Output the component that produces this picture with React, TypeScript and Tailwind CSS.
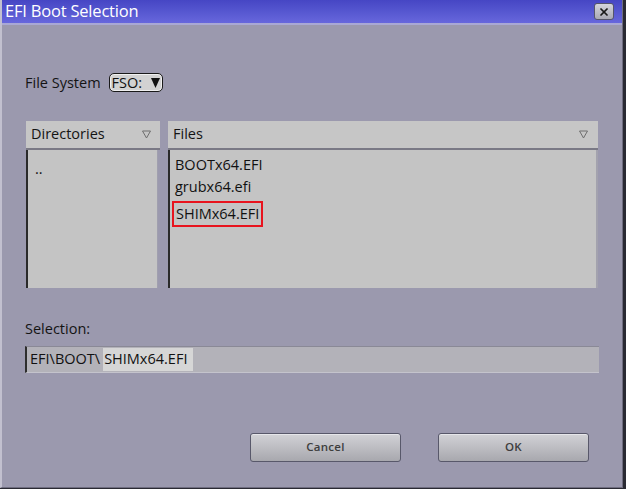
import { X } from 'lucide-react';

const font = { fontFamily: '"Open Sans", "Noto Sans", "Liberation Sans", sans-serif' };

function HeaderArrow() {
  return (
    <svg width="9" height="9" viewBox="0 0 9 9" className="shrink-0">
      <path d="M0.5 1 L8.5 1 L4.5 8 Z" fill="none" stroke="#6e6e6e" strokeWidth="1" />
    </svg>
  );
}

export default function App() {
  const files = ['BOOTx64.EFI', 'grubx64.efi'];

  return (
    <div className="w-[626px] h-[489px] bg-[#2a2a33] overflow-hidden" style={font}>
      <div className="w-[623px] h-[488px] flex flex-col bg-[#9b99ae] border-l-2 border-l-[#c2c0cf] border-r border-r-[#6f6d80] border-b border-b-[#6f6d80]">
        {/* Title bar */}
        <div className="h-[25px] flex items-center justify-between pl-[3px] pr-[8px] bg-gradient-to-b from-[#4646c4] to-[#6767dc] border-b-2 border-b-[#a9a8d4]">
          <span className="text-[16.5px] leading-none text-white tracking-[-0.2px]">EFI Boot Selection</span>
          <button className="w-[20px] h-[17px] flex items-center justify-center rounded-[3px] bg-gradient-to-b from-[#d4d4dc] to-[#a9a9b4] border border-[#55556a]">
            <X size={12} strokeWidth={3.5} className="text-[#1a1a1a]" />
          </button>
        </div>

        <div className="flex flex-col pl-[23px] pr-[23px]">
          {/* File system row */}
          <div className="mt-[47px] flex items-center gap-[8px]">
            <span className="text-[14.5px] text-[#141414]">File System</span>
            <div className="h-[19px] w-[54px] flex items-center justify-between px-[2px] rounded-[5px] border border-[#1a1a1a] bg-[#d2d2d2] shadow-[inset_0_0_0_1px_#f0f0f0]">
              <span className="text-[14.5px] leading-none text-[#111]">FSO:</span>
              <svg width="9" height="12" viewBox="0 0 9 12">
                <path d="M0 1 L9 1 L4.5 11 Z" fill="#111" />
              </svg>
            </div>
          </div>

          {/* Directories / files panels */}
          <div className="mt-[27px] flex gap-[8px] pl-[1px]">
            <div className="w-[134px] flex flex-col">
              <div className="h-[27px] flex items-center justify-between pl-[5px] pr-[9px] bg-[#c6c6c6]">
                <span className="text-[14.5px] text-[#141414]">Directories</span>
                <HeaderArrow />
              </div>
              <div className="h-[2px] bg-[#7a7985]" />
              <div className="h-[138px] w-[132px] bg-[#c4c4c4] border-l-2 border-l-[#2a2a2a] border-r border-r-[#a09fae] pl-[7px] pt-[6px]">
                <span className="text-[14.5px] leading-none text-[#111]">..</span>
              </div>
            </div>
            <div className="w-[430px] flex flex-col">
              <div className="h-[27px] flex items-center justify-between pl-[5px] pr-[10px] bg-[#c6c6c6]">
                <span className="text-[14.5px] text-[#141414]">Files</span>
                <HeaderArrow />
              </div>
              <div className="h-[2px] bg-[#7a7985]" />
              <div className="h-[138px] bg-[#c4c4c4] border-l-2 border-l-[#2a2a2a] border-r-2 border-r-[#a3a2ae] pl-[5px] pt-[4px] flex flex-col">
                {files.map((f) => (
                  <span key={f} className="text-[14.5px] leading-[22px] text-[#111]">{f}</span>
                ))}
                <span className="mt-[3px] self-start -ml-[3px] px-[2px] h-[26px] flex items-center border-2 border-[#e8141e] text-[14.5px] text-[#111]">
                  SHIMx64.EFI
                </span>
              </div>
            </div>
          </div>

          {/* Selection */}
          <span className="mt-[30px] text-[14.5px] text-[#141414]">Selection:</span>
          <div className="mt-[6px] h-[27px] w-[574px] flex items-center bg-[#b3b2b9] border-l-2 border-l-[#2e2e2e] border-t border-t-[#8a8996] border-b border-b-[#c4c3cc] pl-[3px]">
            <span className="text-[14.5px] text-[#111] pr-[3px]">EFI\BOOT\</span>
            <span className="h-[23px] flex items-center bg-[#d6d6d6] pl-[1px] pr-[6px] text-[14.5px] text-[#111]">SHIMx64.EFI</span>
          </div>

          {/* Buttons */}
          <div className="mt-[60px] flex justify-end gap-[37px] pr-[10px]">
            <button className="w-[151px] h-[29px] rounded-[3px] border border-[#58586a] bg-gradient-to-b from-[#d2d2d6] to-[#a8a8ae] text-[11.5px] font-semibold tracking-[0.3px] text-[#3d3d3d] shadow-[inset_0_1px_0_#e6e6ea]">
              Cancel
            </button>
            <button className="w-[151px] h-[29px] rounded-[3px] border border-[#58586a] bg-gradient-to-b from-[#d2d2d6] to-[#a8a8ae] text-[11.5px] font-semibold tracking-[0.3px] text-[#3d3d3d] shadow-[inset_0_1px_0_#e6e6ea]">
              OK
            </button>
          </div>
        </div>
      </div>
    </div>
  );
}
